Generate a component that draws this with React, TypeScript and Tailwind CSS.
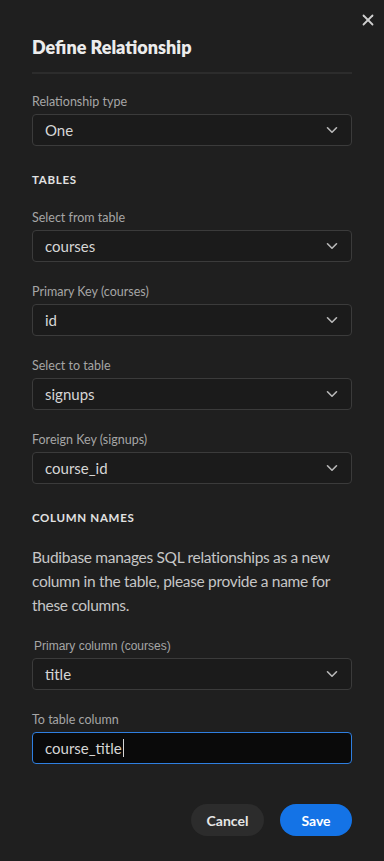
import { X } from 'lucide-react';

const Chevron = () => (
  <svg width="12" height="8" viewBox="0 0 12 8" fill="none" className="shrink-0">
    <path d="M1.5 1.75 6 6.25l4.5-4.5" stroke="#b9b9b9" strokeWidth="1.6" strokeLinecap="round" strokeLinejoin="round" />
  </svg>
);

const Label = ({ children, arial }: { children: React.ReactNode; arial?: boolean }) => (
  <div
    className={
      arial
        ? "pl-[2px] text-[12px] leading-4 text-[#a6a6a6] font-['Liberation_Sans',sans-serif]"
        : 'text-[12.5px] leading-4 text-[#a6a6a6]'
    }
  >
    {children}
  </div>
);

const Select = ({ label, value, arial }: { label: string; value: string; arial?: boolean }) => (
  <div className="flex flex-col gap-[4px]">
    <Label arial={arial}>{label}</Label>
    <div className="flex h-8 items-center justify-between rounded border border-[#3b3b3b] bg-[#1b1b1b] pl-3 pr-[13px]">
      <span className="text-[15px] text-[#d6d6d6]">{value}</span>
      <Chevron />
    </div>
  </div>
);

const SectionHead = ({ children }: { children: React.ReactNode }) => (
  <div className="text-[11.5px] font-bold leading-4 tracking-[0.06em] text-[#e2e2e2]">{children}</div>
);

export default function App() {
  return (
    <div className="relative min-h-[861px] w-full bg-[#1f1f1f] px-8 pt-[35px] font-['Lato',sans-serif]">
      {/* Close */}
      <button className="absolute right-[7px] top-[11px] text-[#cfcfcf]">
        <X className="h-[18px] w-[18px]" strokeWidth={2.4} />
      </button>

      <h1 className="text-[18px] font-extrabold leading-6 text-[#ececec]">Define Relationship</h1>
      <div className="mt-[13px] h-[2px] bg-[#2c2c2c]" />

      <div className="mt-5">
        <Select label="Relationship type" value="One" />
      </div>

      <div className="mt-[26px]">
        <SectionHead>TABLES</SectionHead>
      </div>

      <div className="mt-[22px] flex flex-col gap-[22px]">
        <Select label="Select from table" value="courses" />
        <Select label="Primary Key (courses)" value="id" />
        <Select label="Select to table" value="signups" />
        <Select label="Foreign Key (signups)" value="course_id" />
      </div>

      <div className="mt-[26px]">
        <SectionHead>COLUMN NAMES</SectionHead>
      </div>

      <p className="mt-[19px] text-[15.5px] leading-6 tracking-[-0.02em] text-[#c6c6c6]">
        Budibase manages SQL relationships as a new column in the table, please provide a name for
        these columns.
      </p>

      <div className="mt-[21px]">
        <Select label="Primary column (courses)" value="title" arial />
      </div>

      <div className="mt-[22px] flex flex-col gap-[4px]">
        <Label>To table column</Label>
        <div className="flex h-8 items-center rounded border border-[#2f7fe0] bg-[#0a0a0a] pl-3">
          <span className="text-[15px] text-[#d6d6d6]">course_title</span>
          <span className="ml-px h-[18px] w-px bg-[#d6d6d6]" />
        </div>
      </div>

      <div className="mt-10 flex justify-end gap-4">
        <button className="h-8 w-[73px] rounded-full bg-[#2c2c2c] text-[14px] font-bold text-[#e6e6e6]">
          Cancel
        </button>
        <button className="h-8 w-[72px] rounded-full bg-[#1473e6] text-[14px] font-bold text-white">
          Save
        </button>
      </div>
    </div>
  );
}
